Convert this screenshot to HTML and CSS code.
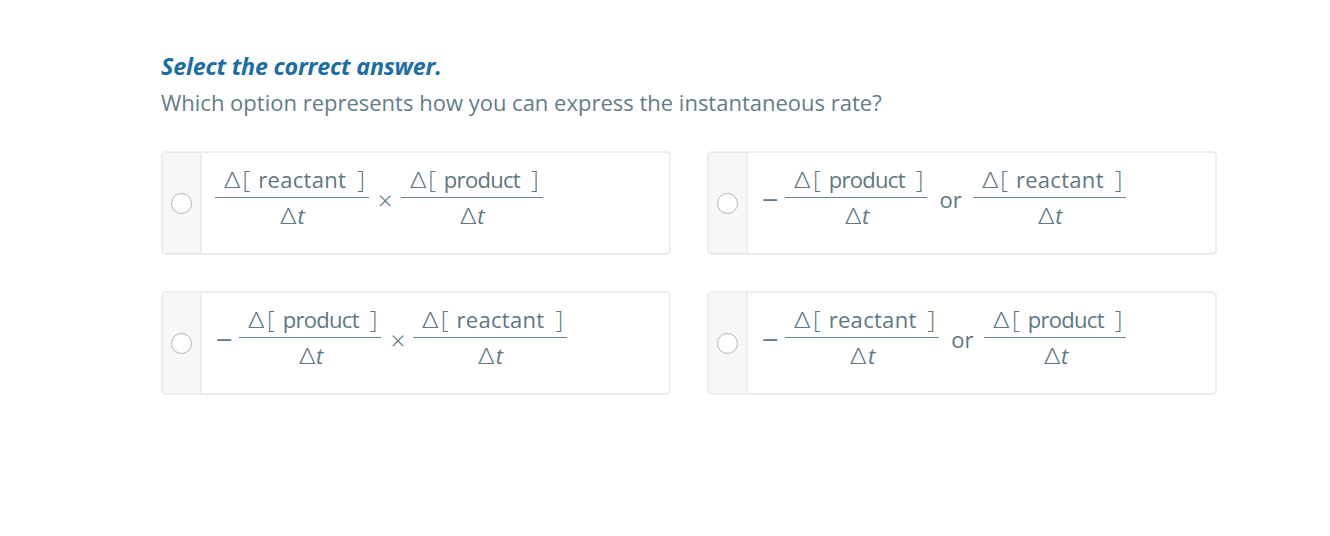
FILE: index.html
```html
<!DOCTYPE html>
<html>
<head>
<meta charset="utf-8">
<link rel="stylesheet" href="styles.css">
</head>
<body>
<div class="page">
  <h1 class="title">Select the correct answer.</h1>
  <p class="question">Which option represents how you can express the instantaneous rate?</p>
  <div class="options">
    <div class="card">
      <div class="gutter"><span class="radio"></span></div>
      <div class="math">
        <span class="frac"><span class="num"><span class="d">Δ</span><span class="br">[</span><span class="wr">reactant</span><span class="br rb">]</span></span><span class="den"><span class="d">Δ</span><i>t</i></span></span>
        <span class="op times">×</span>
        <span class="frac"><span class="num"><span class="d">Δ</span><span class="br">[</span><span class="wp">product</span><span class="br rb">]</span></span><span class="den"><span class="d">Δ</span><i>t</i></span></span>
      </div>
    </div>
    <div class="card">
      <div class="gutter"><span class="radio"></span></div>
      <div class="math">
        <span class="op minus">−</span>
        <span class="frac"><span class="num"><span class="d">Δ</span><span class="br">[</span><span class="wp">product</span><span class="br rb">]</span></span><span class="den"><span class="d">Δ</span><i>t</i></span></span>
        <span class="op or">or</span>
        <span class="frac"><span class="num"><span class="d">Δ</span><span class="br">[</span><span class="wr">reactant</span><span class="br rb">]</span></span><span class="den"><span class="d">Δ</span><i>t</i></span></span>
      </div>
    </div>
    <div class="card">
      <div class="gutter"><span class="radio"></span></div>
      <div class="math">
        <span class="op minus">−</span>
        <span class="frac"><span class="num"><span class="d">Δ</span><span class="br">[</span><span class="wp">product</span><span class="br rb">]</span></span><span class="den"><span class="d">Δ</span><i>t</i></span></span>
        <span class="op times">×</span>
        <span class="frac"><span class="num"><span class="d">Δ</span><span class="br">[</span><span class="wr">reactant</span><span class="br rb">]</span></span><span class="den"><span class="d">Δ</span><i>t</i></span></span>
      </div>
    </div>
    <div class="card">
      <div class="gutter"><span class="radio"></span></div>
      <div class="math">
        <span class="op minus">−</span>
        <span class="frac"><span class="num"><span class="d">Δ</span><span class="br">[</span><span class="wr">reactant</span><span class="br rb">]</span></span><span class="den"><span class="d">Δ</span><i>t</i></span></span>
        <span class="op or">or</span>
        <span class="frac"><span class="num"><span class="d">Δ</span><span class="br">[</span><span class="wp">product</span><span class="br rb">]</span></span><span class="den"><span class="d">Δ</span><i>t</i></span></span>
      </div>
    </div>
  </div>
</div>
</body>
</html>
```
FILE: styles.css
```css
html, body {
  margin: 0;
  padding: 0;
  background: #ffffff;
}
.page {
  padding: 51px 0 0 161px;
  font-family: "Open Sans", "Noto Sans", sans-serif;
}
.title {
  margin: 0;
  font-size: 23.3px;
  line-height: 30px;
  font-weight: 700;
  font-style: italic;
  color: #1b6da6;
  letter-spacing: -0.2px;
}
.question {
  margin: 6px 0 0 0;
  font-size: 22px;
  line-height: 30px;
  color: #627d88;
}
.options {
  display: grid;
  grid-template-columns: 510px 510px;
  grid-auto-rows: 104px;
  column-gap: 36px;
  row-gap: 36px;
  margin-top: 34px;
}
.card {
  display: flex;
  box-sizing: border-box;
  border: 2px solid #ededed;
  border-radius: 5px;
  overflow: hidden;
}
.gutter {
  width: 37px;
  flex: none;
  background: #f7f7f7;
  border-right: 2px solid #ededed;
  display: flex;
  align-items: center;
  justify-content: center;
}
.radio {
  width: 19px;
  height: 19px;
  border-radius: 50%;
  border: 1px solid #b3b3b3;
  background: #ffffff;
}
.math {
  display: flex;
  align-items: center;
  padding: 14px 0 0 13px;
  align-self: flex-start;
  color: #5e7782;
  font-size: 22px;
}
.frac {
  display: inline-flex;
  flex-direction: column;
  align-items: stretch;
  text-align: center;
}
.num {
  padding: 0 4px 6px 8px;
  line-height: 24px;
  border-bottom: 1.5px solid #6d858e;
  white-space: nowrap;
}
.wr {
  letter-spacing: 0.3px;
}
.wp {
  letter-spacing: -0.7px;
}
.den {
  line-height: 28px;
  padding-top: 3px;
}
.d {
  display: inline-block;
  transform: scaleX(1.28);
  margin: 0 3px 0 3px;
  font-weight: 300;
}
.den .d {
  margin: 0 2px 0 3px;
}
.den i {
  font-style: italic;
  margin-left: 1px;
}
.br {
  font-size: 24px;
  font-weight: 300;
  margin: 0 8px 0 1px;
}
.br.rb {
  margin: 0 0 0 11px;
}
.times {
  margin: 0 8px 0 9px;
  font-size: 26px;
  font-weight: 300;
  position: relative;
  top: 2px;
}
.minus {
  margin: 0 6px 0 0;
  font-family: "DejaVu Sans", sans-serif;
  font-size: 22px;
  position: relative;
  top: 1px;
}
.or {
  margin: 0 11px 0 12px;
  position: relative;
  top: 1px;
}
```
